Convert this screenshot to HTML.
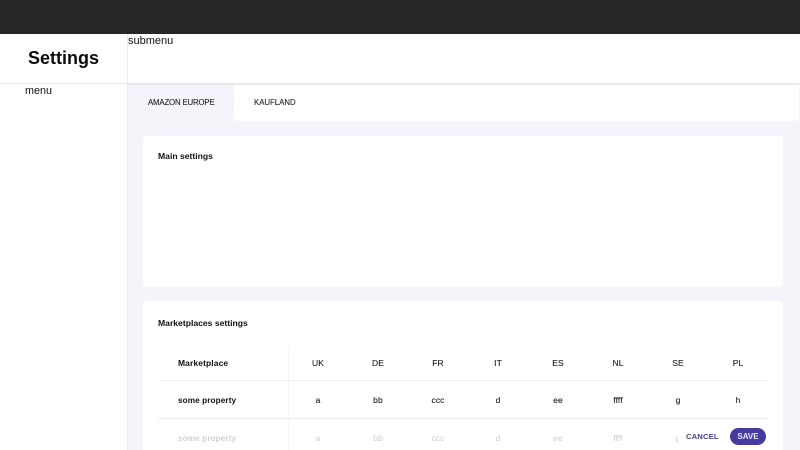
<!DOCTYPE html>
<html><head><meta charset="utf-8"><style>
html,body{margin:0;padding:0;width:800px;height:450px;overflow:hidden;background:#fff;font-family:"Liberation Sans",sans-serif;color:#111}
.a{position:absolute;white-space:nowrap}
.c{transform:translateX(-50%)}
.cell{font-size:8.5px;line-height:12px;letter-spacing:.1px;color:#222;-webkit-text-stroke:.12px #222}
.b{font-weight:700;color:#111;-webkit-text-stroke:0}
.p{font-size:8.2px}
.fade{opacity:.2}
</style></head><body>
<div class="a" style="left:0;top:0;width:800px;height:34px;background:#262626"></div>
<div class="a" style="left:0;top:34px;width:127px;height:416px;background:#fff;border-right:1px solid #e8ebf0"></div>
<div class="a" style="left:0;top:83px;width:128px;height:1px;background:#e6e9ee"></div>
<div class="a" style="left:128px;top:83px;width:672px;height:367px;background:#f4f4fa"></div>
<div class="a" style="left:128px;top:83px;width:672px;height:2px;background:#e6ebf0"></div>
<div class="a" style="left:234px;top:85px;width:565px;height:36px;background:#fff;border-radius:0 0 3px 3px"></div>
<div class="a" style="left:143px;top:136px;width:640px;height:151px;background:#fff;border-radius:4px"></div>
<div class="a" style="left:143px;top:301px;width:640px;height:149px;background:#fff;border-radius:4px 4px 0 0"></div>

<div class="a" style="left:28px;top:47px;font-size:18px;line-height:23px;font-weight:700;color:#0c0c0c">Settings</div>
<div class="a" style="left:128px;top:35px;font-size:11px;line-height:13px;color:#111">submenu</div>
<div class="a" style="left:25px;top:85px;font-size:10.8px;line-height:13px;color:#111">menu</div>

<div class="a" style="left:148px;top:97px;font-size:7.8px;line-height:11px;letter-spacing:-.15px;color:#222;-webkit-text-stroke:.1px #222">AMAZON EUROPE</div>
<div class="a" style="left:254px;top:97px;font-size:7.8px;line-height:11px;color:#222;-webkit-text-stroke:.1px #222">KAUFLAND</div>

<div class="a b" style="left:158px;top:151px;font-size:8.6px;line-height:11px">Main settings</div>
<div class="a b" style="left:158px;top:318px;font-size:8.6px;line-height:11px">Marketplaces settings</div>

<div class="a" style="left:288px;top:345px;width:1px;height:105px;background:#f5f6f8"></div>
<div class="a" style="left:158px;top:380px;width:610px;height:1px;background:#f1f2f4"></div>
<div class="a" style="left:158px;top:418px;width:610px;height:1px;background:#e9eaee"></div>

<div class="a b cell" style="left:178px;top:357px">Marketplace</div>
<div class="a cell c" style="left:318px;top:357px">UK</div>
<div class="a cell c" style="left:378px;top:357px">DE</div>
<div class="a cell c" style="left:438px;top:357px">FR</div>
<div class="a cell c" style="left:498px;top:357px">IT</div>
<div class="a cell c" style="left:558px;top:357px">ES</div>
<div class="a cell c" style="left:618px;top:357px">NL</div>
<div class="a cell c" style="left:678px;top:357px">SE</div>
<div class="a cell c" style="left:738px;top:357px">PL</div>

<div class="a b cell p" style="left:178px;top:395px">some property</div>
<div class="a cell c" style="left:318px;top:394px">a</div>
<div class="a cell c" style="left:378px;top:394px">bb</div>
<div class="a cell c" style="left:438px;top:394px">ccc</div>
<div class="a cell c" style="left:498px;top:394px">d</div>
<div class="a cell c" style="left:558px;top:394px">ee</div>
<div class="a cell c" style="left:618px;top:394px">ffff</div>
<div class="a cell c" style="left:678px;top:394px">g</div>
<div class="a cell c" style="left:738px;top:394px">h</div>

<div class="a b cell p fade" style="left:178px;top:433px">some property</div>
<div class="a cell c fade" style="left:318px;top:432px">a</div>
<div class="a cell c fade" style="left:378px;top:432px">bb</div>
<div class="a cell c fade" style="left:438px;top:432px">ccc</div>
<div class="a cell c fade" style="left:498px;top:432px">d</div>
<div class="a cell c fade" style="left:558px;top:432px">ee</div>
<div class="a cell c fade" style="left:618px;top:432px">ffff</div>
<div class="a cell c fade" style="left:678px;top:432px">g</div>

<div class="a" style="left:678px;top:424px;width:90px;height:26px;background:#fff"></div>
<div class="a" style="left:686px;top:431px;font-size:7.7px;line-height:12px;font-weight:700;color:#4a3f9a;letter-spacing:.1px">CANCEL</div>
<div class="a" style="left:730px;top:428px;width:36px;height:17px;border-radius:9px;background:#453a9e;color:#e8e6f7;font-size:8px;line-height:18px;font-weight:700;text-align:center">SAVE</div>
</body></html>
